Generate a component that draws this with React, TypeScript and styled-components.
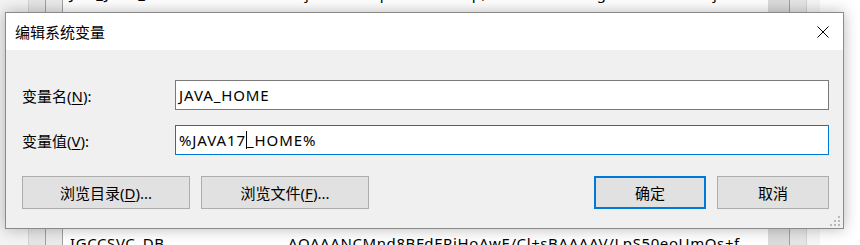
import styled, { createGlobalStyle } from "styled-components"

const GlobalStyle = createGlobalStyle`
    html, body {
        margin: 0;
        padding: 0;
    }
    body {
        width: 860px;
        height: 245px;
        overflow: hidden;
        background: #ffffff;
        font-family: "Noto Sans", "Noto Sans CJK SC", sans-serif;
    }
`

const rows = [
    { name: "JDK_JAVA_OPTIONS", value: "-Djava.io.tmpdir=D:\\temp; -Dfile.encoding=UTF-8 -Dsun.jnu.encoding=py" },
    { name: "JAVA_TOOL_OPTIONS", value: "-Dfile.encoding=UTF-8 -Duser.language=en -Dlog4j2.formatMsgNoLookups" },
    { name: "JAVA_HOME", value: "%JAVA17_HOME%" },
    { name: "JAVA17_HOME", value: "C:\\Program Files\\Java\\jdk-17" },
    { name: "JAVA8_HOME", value: "C:\\Program Files\\Java\\jdk1.8.0_341" },
    { name: "NUMBER_OF_PROCESSORS", value: "16" },
    { name: "OS", value: "Windows_NT" },
    { name: "Path", value: "C:\\Windows\\system32;C:\\Windows;C:\\Windows\\System32\\Wbem" },
    { name: "PATHEXT", value: ".COM;.EXE;.BAT;.CMD;.VBS;.VBE;.JS;.JSE;.WSF;.WSH;.MSC" },
    { name: "PROCESSOR_ARCHITECTURE", value: "AMD64" },
    { name: "IGCCSVC_DB", value: "AQAAANCMnd8BFdERjHoAwE/Cl+sBAAAAV/LpS50eoUmOs+f" },
]

export default function App() {
    return (
        <Screen>
            <GlobalStyle />
            <Backdrop>
                <Strip $width={28} $tone="#f3f3f3" />
                <Strip $width={17} $tone="#e6e6e6" $line />
                <Strip $width={17} $tone="#ebebeb" $line $dark />
                <List>
                    {rows.map((r) => (
                        <ListRow key={r.name}>
                            <span>{r.name}</span>
                            <span>{r.value}</span>
                        </ListRow>
                    ))}
                </List>
                <Strip $width={21} $tone="#dcdcdc" />
                <Strip $width={17} $tone="#e6e6e6" $line $dark />
                <Strip $width={14} $tone="#f6f6f6" $line />
                <Strip $width={40} $tone="#ffffff" />
            </Backdrop>

            <Dialog>
                <TitleBar>
                    <Title>编辑系统变量</Title>
                    <CloseButton>
                        <svg width="12" height="12" viewBox="0 0 12 12">
                            <path d="M0.5 0.5 L11.5 11.5 M11.5 0.5 L0.5 11.5" stroke="#000" strokeWidth="1" fill="none" />
                        </svg>
                    </CloseButton>
                </TitleBar>

                <Body>
                    <Field>
                        <Label>变量名(<u>N</u>):</Label>
                        <TextBox>JAVA_HOME</TextBox>
                    </Field>
                    <Field>
                        <Label>变量值(<u>V</u>):</Label>
                        <TextBox $focused>
                            %JAVA17<Caret />_HOME%
                        </TextBox>
                    </Field>

                    <ButtonRow>
                        <Button $width={168}>浏览目录(<u>D</u>)...</Button>
                        <Button $width={168}>浏览文件(<u>F</u>)...</Button>
                        <Spacer />
                        <Button $width={112} $default>确定</Button>
                        <Button $width={112}>取消</Button>
                    </ButtonRow>
                </Body>

                <Grip width="12" height="12" viewBox="0 0 12 12">
                    <rect x="9" y="1" width="2" height="2" fill="#b9b9b9" />
                    <rect x="5" y="5" width="2" height="2" fill="#b9b9b9" />
                    <rect x="9" y="5" width="2" height="2" fill="#b9b9b9" />
                    <rect x="1" y="9" width="2" height="2" fill="#b9b9b9" />
                    <rect x="5" y="9" width="2" height="2" fill="#b9b9b9" />
                    <rect x="9" y="9" width="2" height="2" fill="#b9b9b9" />
                </Grip>
            </Dialog>
        </Screen>
    )
}

const Screen = styled.div`
    position: relative;
    width: 860px;
    height: 245px;
    overflow: hidden;
`

const Backdrop = styled.div`
    display: flex;
    flex-direction: row;
    width: 100%;
    height: 100%;
`

const Strip = styled.div<{ $width: number; $tone: string; $line?: boolean; $dark?: boolean }>`
    flex: 0 0 ${(p) => p.$width}px;
    height: 100%;
    box-sizing: border-box;
    background: ${(p) => p.$tone};
    border-left: ${(p) => (p.$line ? `1px solid ${p.$dark ? "#a0a0a0" : "#d4d4d4"}` : "none")};
`

const List = styled.div`
    flex: 1;
    display: flex;
    flex-direction: column;
    margin-top: -20px;
    background: #ffffff;
    border-left: 1px solid #a0a0a0;
    overflow: hidden;
`

const ListRow = styled.div`
    display: grid;
    grid-template-columns: 218px 1fr;
    flex: 0 0 25px;
    align-items: center;
    padding-left: 7px;
    font-size: 15px;
    letter-spacing: 0.6px;
    color: #000;
    white-space: nowrap;
`

const Dialog = styled.div`
    position: absolute;
    left: 5px;
    top: 12px;
    width: 839px;
    height: 217px;
    box-sizing: border-box;
    display: flex;
    flex-direction: column;
    border: 1px solid #8a8a8a;
    background: #f0f0f0;
    box-shadow: 0 0 14px rgba(0, 0, 0, 0.28);
`

const TitleBar = styled.div`
    flex: 0 0 37px;
    display: flex;
    align-items: center;
    justify-content: space-between;
    padding-left: 9px;
    background: #ffffff;
`

const Title = styled.div`
    font-size: 15px;
    color: #000;
`

const CloseButton = styled.div`
    width: 40px;
    height: 100%;
    display: flex;
    align-items: center;
    justify-content: center;
`

const Body = styled.div`
    flex: 1;
    display: flex;
    flex-direction: column;
    gap: 15px;
    padding: 30px 14px 18px 16px;
    font-size: 15px;
    color: #000;
`

const Field = styled.div`
    display: flex;
    align-items: center;
    height: 30px;
`

const Label = styled.div`
    flex: 0 0 153px;

    u {
        text-decoration-thickness: 1px;
        text-underline-offset: 2px;
    }
`

const TextBox = styled.div<{ $focused?: boolean }>`
    flex: 1;
    height: 30px;
    box-sizing: border-box;
    display: flex;
    align-items: center;
    padding-left: 3px;
    background: #ffffff;
    border: 1px solid ${(p) => (p.$focused ? "#0078d7" : "#7a7a7a")};
    letter-spacing: 0.9px;
    white-space: pre;
`

const Caret = styled.span`
    display: inline-block;
    width: 1px;
    height: 18px;
    background: #000;
`

const ButtonRow = styled.div`
    display: flex;
    gap: 11px;
    margin-top: 6px;
`

const Spacer = styled.div`
    flex: 1;
`

const Button = styled.div<{ $width: number; $default?: boolean }>`
    flex: 0 0 ${(p) => p.$width}px;
    height: 33px;
    box-sizing: border-box;
    display: flex;
    align-items: center;
    justify-content: center;
    background: #e1e1e1;
    border: ${(p) => (p.$default ? "2px solid #0078d7" : "1px solid #adadad")};
    font-size: 15px;
    color: #000;

    u {
        text-decoration-thickness: 1px;
        text-underline-offset: 2px;
    }
`

const Grip = styled.svg`
    position: absolute;
    right: 2px;
    bottom: 1px;
`
